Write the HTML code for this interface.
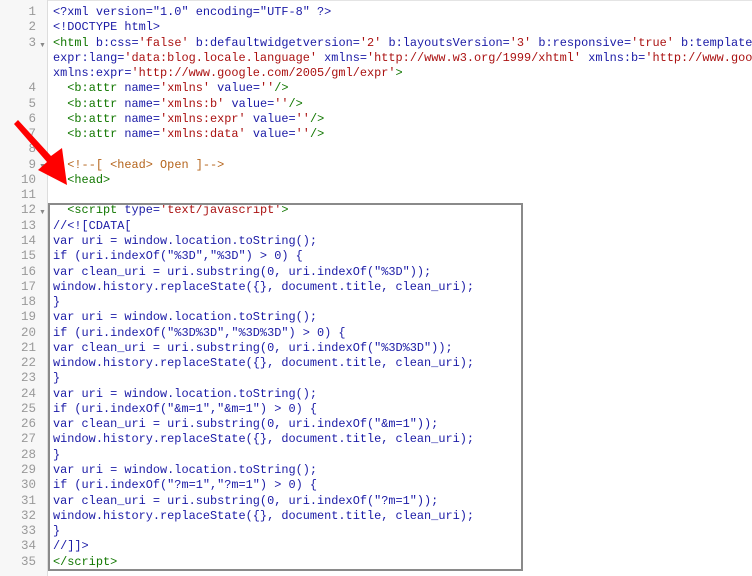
<!DOCTYPE html>
<html><head><style>
html,body{margin:0;padding:0;width:752px;height:576px;overflow:hidden;background:#fff}
.gut{position:absolute;left:0;top:0;width:47px;height:576px;background:#f7f7f7;border-right:1px solid #ddd}
.topl{position:absolute;left:0;top:0;width:752px;height:1px;background:#e4e4e4}
pre{margin:0;position:absolute;top:5px;font-family:"Liberation Mono",monospace;font-size:11.9px;line-height:15.27px;white-space:pre}
.nums{left:0;width:36px;text-align:right;color:#999;font-size:12.5px}
.f{position:absolute;font-size:7px;color:#888}
.code{left:53px;color:#1a1aa6}
.t{color:#117700}.a{color:#1a1aa6}.s{color:#a11}.c{color:#b5651d}
.box{position:absolute;left:48px;top:203px;width:471px;height:364px;border:2px solid #8a8a8a}
</style></head><body>
<div class="topl"></div>
<div class="gut"></div>
<pre class="nums">1
2
3


4
5
6
7
8
9
10
11
12
13
14
15
16
17
18
19
20
21
22
23
24
25
26
27
28
29
30
31
32
33
34
35</pre>
<div class="f" style="left:39px;top:41px">▼</div>
<div class="f" style="left:39px;top:162px">▼</div>
<div class="f" style="left:39px;top:208px">▼</div>
<pre class="code"><span class="a">&lt;?xml version="1.0" encoding="UTF-8" ?&gt;
&lt;!DOCTYPE html&gt;</span>
<span class="t">&lt;html</span> <span class="a">b:css=</span><span class="s">'false'</span> <span class="a">b:defaultwidgetversion=</span><span class="s">'2'</span> <span class="a">b:layoutsVersion=</span><span class="s">'3'</span> <span class="a">b:responsive=</span><span class="s">'true'</span> <span class="a">b:template</span>
<span class="a">expr:lang=</span><span class="s">'data:blog.locale.language'</span> <span class="a">xmlns=</span><span class="s">'http://www.w3.org/1999/xhtml'</span> <span class="a">xmlns:b=</span><span class="s">'http://www.goo</span>
<span class="a">xmlns:expr=</span><span class="s">'http://www.google.com/2005/gml/expr'</span><span class="t">&gt;</span>
  <span class="t">&lt;b:attr</span> <span class="a">name=</span><span class="s">'xmlns'</span> <span class="a">value=</span><span class="s">''</span><span class="t">/&gt;</span>
  <span class="t">&lt;b:attr</span> <span class="a">name=</span><span class="s">'xmlns:b'</span> <span class="a">value=</span><span class="s">''</span><span class="t">/&gt;</span>
  <span class="t">&lt;b:attr</span> <span class="a">name=</span><span class="s">'xmlns:expr'</span> <span class="a">value=</span><span class="s">''</span><span class="t">/&gt;</span>
  <span class="t">&lt;b:attr</span> <span class="a">name=</span><span class="s">'xmlns:data'</span> <span class="a">value=</span><span class="s">''</span><span class="t">/&gt;</span>

  <span class="c">&lt;!--[ &lt;head&gt; Open ]--&gt;</span>
  <span class="t">&lt;head&gt;</span>

  <span class="t">&lt;script</span> <span class="a">type=</span><span class="s">'text/javascript'</span><span class="t">&gt;</span>
//&lt;![CDATA[
var uri = window.location.toString();
if (uri.indexOf("%3D","%3D") &gt; 0) {
var clean_uri = uri.substring(0, uri.indexOf("%3D"));
window.history.replaceState({}, document.title, clean_uri);
}
var uri = window.location.toString();
if (uri.indexOf("%3D%3D","%3D%3D") &gt; 0) {
var clean_uri = uri.substring(0, uri.indexOf("%3D%3D"));
window.history.replaceState({}, document.title, clean_uri);
}
var uri = window.location.toString();
if (uri.indexOf("&amp;m=1","&amp;m=1") &gt; 0) {
var clean_uri = uri.substring(0, uri.indexOf("&amp;m=1"));
window.history.replaceState({}, document.title, clean_uri);
}
var uri = window.location.toString();
if (uri.indexOf("?m=1","?m=1") &gt; 0) {
var clean_uri = uri.substring(0, uri.indexOf("?m=1"));
window.history.replaceState({}, document.title, clean_uri);
}
//]]&gt;
<span class="t">&lt;/script&gt;</span></pre>
<div class="box"></div>
<svg style="position:absolute;left:0;top:0" width="100" height="200"><polygon points="14,124 18,120 51,156 62,148 67,185 38,170 47,162" fill="#f00"/></svg>
</body></html>
